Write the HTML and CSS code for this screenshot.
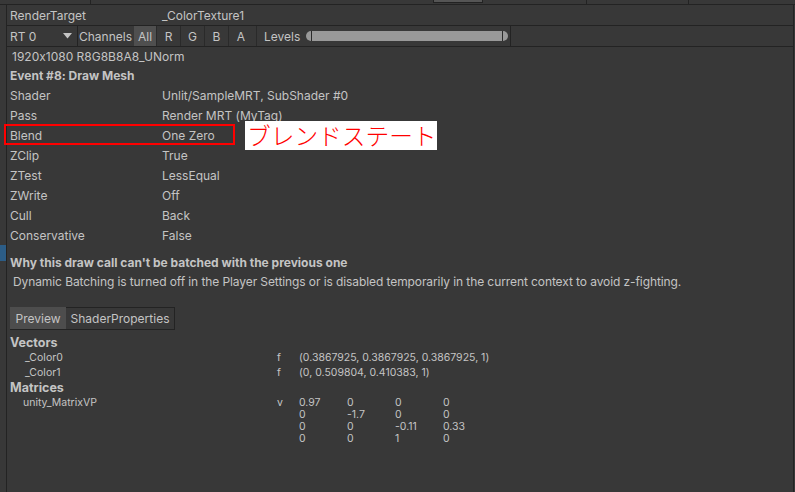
FILE: index.html
```html
<!DOCTYPE html>
<html lang="ja">
<head>
<meta charset="utf-8">
<link rel="stylesheet" href="styles.css">
</head>
<body>
<div class="top">
  <div class="tcell t1"></div>
  <div class="tcell t2"><span class="thumb"></span></div>
  <div class="tcell t3"></div>
  <div class="tcell t4"></div>
</div>
<div class="frame">
  <div class="side">
    <div class="sel"></div>
  </div>
  <div class="main">
    <div class="hrow"><span class="k">RenderTarget</span><span>_ColorTexture1</span></div>
    <div class="toolbar">
      <div class="dd"><span>RT 0</span><svg class="tri" width="9" height="6" viewBox="0 0 9 6"><path d="M0 0H9L4.5 5.5Z" fill="#c4c4c4"/></svg></div>
      <span class="chan">Channels</span>
      <span class="btn on">All</span>
      <span class="btn">R</span>
      <span class="btn">G</span>
      <span class="btn">B</span>
      <span class="btn last">A</span>
      <div class="lvl">
        <span>Levels</span>
        <div class="slider"><span class="kn"></span><span class="ln"></span><span class="tr"></span><span class="ln"></span><span class="kn"></span></div>
      </div>
    </div>
    <div class="info">1920x1080 R8G8B8A8_UNorm</div>
    <div class="event">Event #8: Draw Mesh</div>
    <div class="props">
      <div class="prop"><span>Shader</span><span>Unlit/SampleMRT, SubShader #0</span></div>
      <div class="prop"><span>Pass</span><span>Render MRT (MyTag)</span></div>
      <div class="prop blend"><span>Blend</span><span>One Zero</span><div class="redbox"></div><div class="callout">ブレンドステート</div></div>
      <div class="prop"><span>ZClip</span><span>True</span></div>
      <div class="prop"><span>ZTest</span><span>LessEqual</span></div>
      <div class="prop"><span>ZWrite</span><span>Off</span></div>
      <div class="prop"><span>Cull</span><span>Back</span></div>
      <div class="prop"><span>Conservative</span><span>False</span></div>
    </div>
    <div class="why">Why this draw call can't be batched with the previous one</div>
    <div class="desc">Dynamic Batching is turned off in the Player Settings or is disabled temporarily in the current context to avoid z-fighting.</div>
    <div class="tabs"><span class="tab on">Preview</span><span class="tab">ShaderProperties</span></div>
    <div class="sp">
      <div class="sh">Vectors</div>
      <div class="vrow"><span class="nm v">_Color0</span><span class="ty">f</span><span>(0.3867925, 0.3867925, 0.3867925, 1)</span></div>
      <div class="vrow"><span class="nm v">_Color1</span><span class="ty">f</span><span>(0, 0.509804, 0.410383, 1)</span></div>
      <div class="sh">Matrices</div>
      <div class="mrow"><span class="nm">unity_MatrixVP</span><span class="ty">v</span><span>0.97</span><span>0</span><span>0</span><span>0</span></div>
      <div class="mrow"><span class="nm"></span><span class="ty"></span><span>0</span><span>-1.7</span><span>0</span><span>0</span></div>
      <div class="mrow"><span class="nm"></span><span class="ty"></span><span>0</span><span>0</span><span>-0.11</span><span>0.33</span></div>
      <div class="mrow"><span class="nm"></span><span class="ty"></span><span>0</span><span>0</span><span>1</span><span>0</span></div>
    </div>
  </div>
</div>
</body>
</html>
```
FILE: styles.css
```css
html, body {
  margin: 0;
  padding: 0;
}
body {
  width: 795px;
  height: 492px;
  overflow: hidden;
  background: #383838;
  color: #c4c4c4;
  font-family: Inter, "Noto Sans", sans-serif;
  font-size: 12px;
  font-feature-settings: "calt" 0;
}
.top {
  display: flex;
  height: 4px;
  border-bottom: 1px solid #232323;
}
.tcell {
  height: 4px;
  box-sizing: border-box;
}
.t1 { width: 91px; border-right: 1px solid #232323; }
.t2 { width: 496px; border-right: 1px solid #232323; position: relative; }
.t3 { width: 102px; border-right: 1px solid #232323; }
.t4 { flex: 1; }
.thumb {
  position: absolute;
  left: 342px;
  top: 0;
  width: 48px;
  height: 2px;
  background: #555;
  border: 1px solid #222;
  border-top: 0;
}
.frame {
  display: flex;
  height: 487px;
}
.side {
  width: 6px;
  border-right: 1px solid #232323;
  display: flex;
  flex-direction: column;
}
.sel {
  margin-top: 240px;
  width: 6px;
  height: 16px;
  background: #2c5d87;
}
.main {
  flex: 1;
  border-right: 1px solid #232323;
  margin-right: 1px;
}
.hrow {
  display: grid;
  grid-template-columns: 152px 1fr;
  height: 20px;
  align-items: center;
  padding-left: 3px;
  border-bottom: 1px solid #232323;
}
.toolbar {
  display: flex;
  height: 20px;
  align-items: center;
  border-bottom: 1px solid #232323;
}
.dd {
  width: 71px;
  height: 20px;
  box-sizing: border-box;
  border-right: 1px solid #232323;
  display: flex;
  align-items: center;
  justify-content: space-between;
  padding: 0 5px 0 3px;
}
.tri { display: block; }
.chan {
  width: 56px;
  padding-left: 1px;
  box-sizing: border-box;
}
.btn {
  width: 24px;
  height: 20px;
  box-sizing: border-box;
  border-right: 1px solid #2a2a2a;
  display: flex;
  align-items: center;
  justify-content: center;
}
.btn.on { background: #4f4f4f; width: 23px; }
.btn.last { width: 28px; padding-right: 3px; }
.lvl {
  width: 254px;
  height: 20px;
  box-sizing: border-box;
  border-right: 1px solid #232323;
  display: flex;
  align-items: center;
  padding-left: 7px;
  padding-right: 2px;
}
.slider {
  margin-left: auto;
  width: 202px;
  height: 10px;
  display: flex;
  border-radius: 5px;
  overflow: hidden;
  background: #999;
}
.kn { width: 5px; }
.ln { width: 1px; background: #2a2a2a; }
.tr { flex: 1; }
.info {
  height: 20px;
  line-height: 20px;
  padding-left: 5px;
}
.event {
  height: 18px;
  line-height: 18px;
  padding-left: 3px;
  font-weight: 700;
}
.prop {
  display: grid;
  grid-template-columns: 152px 1fr;
  height: 20px;
  align-items: center;
  padding-left: 3px;
}
.blend { position: relative; }
.redbox {
  position: absolute;
  left: -3px;
  top: -1px;
  width: 231px;
  height: 21px;
  box-sizing: border-box;
  border: 2px solid #ff0000;
}
.callout {
  position: absolute;
  left: 238px;
  top: -4px;
  width: 192px;
  height: 29px;
  background: #ffffff;
  color: #ff0000;
  font-family: "Noto Sans CJK JP", sans-serif;
  font-weight: 300;
  font-size: 23.7px;
  line-height: 29px;
  padding-left: 2px;
  box-sizing: border-box;
  white-space: nowrap;
}
.why {
  margin-top: 8px;
  height: 19px;
  line-height: 19px;
  padding-left: 3px;
  font-weight: 700;
}
.desc {
  height: 19px;
  line-height: 19px;
  padding-left: 6px;
  letter-spacing: -0.09px;
}
.tabs {
  margin-top: 16px;
  margin-left: 3px;
  display: flex;
  width: 165px;
  height: 23px;
}
.tab {
  height: 23px;
  box-sizing: border-box;
  display: flex;
  align-items: center;
  justify-content: center;
  border: 1px solid #232323;
  border-left: 0;
}
.tab.on {
  width: 56px;
  background: #4d4d4d;
  border: 0;
  border-bottom: 1px solid #232323;
}
.tab + .tab { width: 109px; }
.sp {
  margin-top: 5px;
}
.sh {
  height: 16px;
  line-height: 16px;
  padding-left: 3px;
  font-weight: 700;
  font-size: 12.5px;
}
.vrow, .mrow {
  display: grid;
  grid-template-columns: 270px 22px 1fr;
  font-size: 10.5px;
  height: 14.5px;
  line-height: 14.5px;
}
.mrow {
  grid-template-columns: 270px 22px 48px 48px 48px 48px;
  height: 12px;
  line-height: 12px;
}
.nm { padding-left: 16px; }
.nm.v { padding-left: 18px; }
.sh + .mrow { margin-top: 1px; }
```
